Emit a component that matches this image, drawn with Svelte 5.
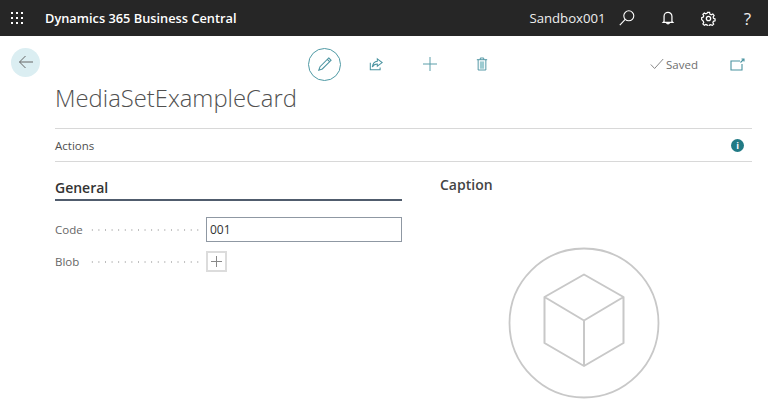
<script>
  const dots = [0, 1, 2];
</script>

<div class="page">
  <header class="topbar">
    <svg class="waffle" width="16" height="16" viewBox="0 0 16 16" aria-hidden="true">
      {#each dots as y}
        {#each dots as x}
          <rect x={2 + x * 5} y={2 + y * 5} width="2" height="2" fill="#fff" />
        {/each}
      {/each}
    </svg>
    <span class="brand">Dynamics 365 Business Central</span>
    <span class="env">Sandbox001</span>
    <button class="tb-btn search" aria-label="Search">
      <svg width="18" height="18" viewBox="0 0 18 18" fill="none" stroke="#fff" stroke-width="1.1"><circle cx="10.8" cy="6.8" r="5" /><path d="M7.2 10.4 1.8 16.2" /></svg>
    </button>
    <button class="tb-btn bell" aria-label="Notifications">
      <svg width="14" height="16" viewBox="0 0 16 18" fill="none" stroke="#fff" stroke-width="1.4"><path d="M3.5 13V7a4.5 4.5 0 0 1 9 0v6l1 1h-11zM6.3 14.5a1.8 1.8 0 0 0 3.4 0" /></svg>
    </button>
    <button class="tb-btn gear" aria-label="Settings">
      <svg width="15" height="15" viewBox="0 0 16 16" fill="none" stroke="#fff" stroke-width="1.4"><circle cx="8" cy="8" r="2.3" /><path d="M6.8 1h2.4l.4 2 1.5.7 1.8-1 1.5 1.8-1.1 1.6.4 1.5 1.8.8v2.2l-1.9.6-.6 1.5.9 1.7-1.7 1.5-1.6-1-1.5.5-.6 1.6H6.8l-.5-1.8-1.5-.5-1.6 1-1.7-1.6 1-1.6-.6-1.5L.1 9.2V7l1.9-.7.5-1.5-1-1.6 1.6-1.6 1.7 1 1.5-.6z" transform="translate(.6 .6) scale(.93)" /></svg>
    </button>
    <span class="help">?</span>
  </header>

  <div class="toolbar">
    <button class="back" aria-label="Back">
      <svg width="16" height="14" viewBox="0 0 16 14" fill="none" stroke="#666" stroke-width="1"><path d="M15 7H1.5M7.5 1 1.5 7l6 6" /></svg>
    </button>
    <div class="actions">
      <button class="edit" aria-label="Edit">
        <svg width="16" height="16" viewBox="0 0 18 18" fill="none" stroke="#4a93a0" stroke-width="1.2"><path d="M13.2 2.2 15.8 4.8 6 14.6 2 16l1.4-4zM11.6 3.8l2.6 2.6" /></svg>
      </button>
      <button class="act share" aria-label="Share">
        <svg width="14" height="14" viewBox="0 0 16 16" fill="none" stroke="#4a93a0" stroke-width="1.2"><path d="M1.5 6.5v8h11.2v-2.4M9.5 2.2 15 6.4l-5.5 4V8C7 8 5.2 9 3.8 11.5 4.3 7.4 6.3 5 9.5 4.8z" /></svg>
      </button>
      <button class="act plus" aria-label="New">
        <svg width="14" height="14" viewBox="0 0 14 14" stroke="#5a9ea9" stroke-width="1"><path d="M7 0v14M0 7h14" /></svg>
      </button>
      <button class="act trash" aria-label="Delete">
        <svg width="12" height="14" viewBox="0 0 14 16" fill="none" stroke="#4a93a0" stroke-width="1.1"><path d="M1 3h12M5 3V1h4v2M2.5 3v12h9V3" /><rect x="4.5" y="5" width="5" height="8.5" fill="#9ccbd1" stroke="none" /></svg>
      </button>
    </div>
    <div class="status">
      <svg width="14" height="12" viewBox="0 0 14 12" fill="none" stroke="#888" stroke-width="1"><path d="M.8 6.5 4.6 10.5 13.2 1" /></svg>
      <span>Saved</span>
      <svg class="popout" width="15" height="13" viewBox="0 0 15 13" fill="none" stroke="#4a93a0" stroke-width="1.1"><path d="M10 3H1v9h11V6M10.5 4.5 14 1M11.5 1H14v2.5" /></svg>
    </div>
  </div>

  <h1 class="title">MediaSetExampleCard</h1>

  <div class="action-bar">
    <span>Actions</span>
    <span class="info">i</span>
  </div>

  <div class="columns">
    <section class="general">
      <h2 class="section-head">General</h2>
      <div class="field first">
        <span class="label">Code</span>
        <span class="leader"></span>
        <input class="input" value="001" aria-label="Code" />
      </div>
      <div class="field">
        <span class="label">Blob</span>
        <span class="leader"></span>
        <button class="blob" aria-label="Add blob">
          <svg width="11" height="11" viewBox="0 0 11 11" stroke="#888" stroke-width="1"><path d="M5.5 0v11M0 5.5h11" /></svg>
        </button>
      </div>
    </section>

    <section class="caption">
      <h2 class="caption-head">Caption</h2>
      <svg class="placeholder" width="152" height="152" viewBox="0 0 152 152" fill="none" stroke="#c8c8c8">
        <circle cx="76" cy="76" r="74.5" stroke-width="1.8" />
        <path stroke-width="2" stroke-linejoin="round" d="M76 27.5 115.5 50V96L76 119 36.5 96V50zM36.5 50 76 73.5 115.5 50M76 73.5V119" />
      </svg>
    </section>
  </div>
</div>

<style>
  :global(body) {
    background: #fff;
    font-family: "Open Sans", "Noto Sans", sans-serif;
  }

  button {
    padding: 0;
    border: 0;
    background: none;
    display: flex;
    align-items: center;
    justify-content: center;
  }

  .page {
    width: 768px;
    height: 420px;
    overflow: hidden;
    background: #fff;
  }

  .topbar {
    height: 36px;
    background: #262626;
    display: flex;
    align-items: center;
    color: #fff;
  }

  .waffle {
    margin-left: 9px;
  }

  .brand {
    margin-left: 20px;
    font-size: 12.8px;
    font-weight: 600;
  }

  .env {
    margin-left: auto;
    font-size: 13.2px;
    color: #eee;
  }

  .tb-btn {
    width: 18px;
    height: 18px;
  }

  .search {
    margin-left: 12px;
  }

  .bell {
    margin-left: 23px;
  }

  .gear {
    margin-left: 23px;
  }

  .help {
    margin: 0 17px 0 26px;
    font-size: 17px;
    color: #eee;
  }

  .toolbar {
    height: 56px;
    padding: 0 23px 0 11px;
    display: flex;
    align-items: center;
  }

  .back {
    width: 29px;
    height: 29px;
    margin-top: -4px;
    border-radius: 50%;
    background: #dbeef2;
  }

  .actions {
    margin-left: 268px;
    display: flex;
    align-items: center;
  }

  .edit {
    width: 33px;
    height: 33px;
    border: 1px solid #4f9aa5;
    border-radius: 50%;
    box-sizing: border-box;
  }

  .act {
    width: 16px;
    height: 16px;
  }

  .share {
    margin-left: 27px;
  }

  .plus {
    margin-left: 38px;
  }

  .trash {
    margin-left: 36px;
  }

  .status {
    margin-left: auto;
    display: flex;
    align-items: center;
    font-size: 11.5px;
    color: #6e6e6e;
  }

  .status span {
    margin-left: 2px;
  }

  .popout {
    margin-left: 32px;
  }

  .title {
    margin: -12px 0 0 55px;
    font-size: 23.8px;
    font-weight: 300;
    line-height: 36px;
    color: #505050;
  }

  .action-bar {
    margin: 12px 16px 0 55px;
    height: 32px;
    border-top: 1px solid #d8d8d8;
    border-bottom: 1px solid #d8d8d8;
    display: flex;
    align-items: center;
    justify-content: space-between;
    font-size: 11.5px;
    color: #505050;
  }

  .info {
    width: 13px;
    height: 13px;
    margin-right: 8px;
    border-radius: 50%;
    background: #217a85;
    color: #fff;
    font-size: 9px;
    font-weight: 700;
    line-height: 13px;
    text-align: center;
  }

  .columns {
    display: flex;
    padding-left: 55px;
  }

  .general {
    width: 347px;
  }

  .section-head {
    height: 39px;
    margin: 0;
    box-sizing: border-box;
    padding-top: 15px;
    border-bottom: 2px solid #505c6d;
    font-size: 14px;
    font-weight: 600;
    line-height: 22px;
    color: #333;
  }

  .field {
    height: 24px;
    margin-top: 8px;
    display: flex;
    align-items: center;
    font-size: 11.5px;
    color: #666;
  }

  .field.first {
    margin-top: 16px;
  }

  .label {
    width: 34px;
  }

  .leader {
    width: 111px;
    height: 2px;
    margin: 2px 6px 0 0;
    background-image: radial-gradient(circle, #bbb 0.7px, transparent 0.8px);
    background-size: 6.6px 2px;
  }

  .input {
    width: 196px;
    height: 25px;
    box-sizing: border-box;
    padding: 0 3px;
    border: 1px solid #8f98a3;
    font: inherit;
    font-size: 12px;
    color: #333;
    outline: none;
  }

  .blob {
    width: 21px;
    height: 21px;
    box-sizing: border-box;
    border: 2px solid #dcdcdc;
  }

  .caption {
    margin-left: 38px;
    width: 288px;
  }

  .caption-head {
    margin: 0;
    padding-top: 12px;
    font-size: 14px;
    font-weight: 600;
    line-height: 22px;
    color: #444;
  }

  .placeholder {
    display: block;
    margin: 51px auto 0;
  }
</style>
